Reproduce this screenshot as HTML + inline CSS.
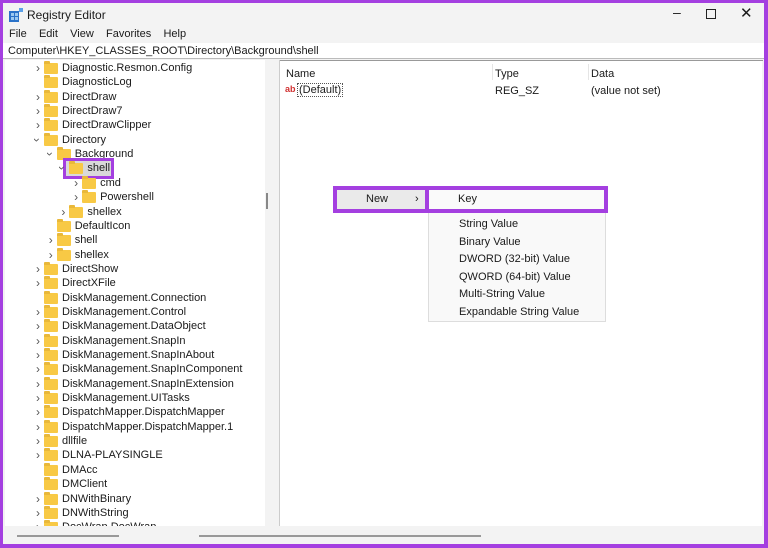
<!DOCTYPE html>
<html><head><meta charset="utf-8"><style>
*{margin:0;padding:0;box-sizing:border-box}
body{width:768px;height:548px;overflow:hidden;background:#a43fe0;font-family:"Liberation Sans",sans-serif;font-size:11px;color:#1a1a1a;position:relative}
#win{position:absolute;left:3px;top:3px;width:761px;height:541px;background:#f3f3f3}
.abs{position:absolute;white-space:nowrap}
#tree{position:absolute;left:2px;top:57px;width:260px;height:466px;background:#fff;overflow:hidden}
#right{position:absolute;left:276px;top:57px;width:483px;height:466px;background:#fff;border-left:1px solid #ccc}
.row{position:absolute;height:14px;line-height:14px;white-space:nowrap}
.fd{position:absolute;top:2px;width:14px;height:11px;background:#f8c945;border-radius:1px}
.fd:before{content:"";position:absolute;left:0;top:-2px;width:6px;height:3px;background:#e9b83a;border-radius:1px 1px 0 0}
.ch{position:absolute;top:0;font-size:12px;color:#555}
.mi{position:absolute;left:30px;height:17.5px;line-height:17.5px}
</style></head><body>
<div id="win">
<svg class="abs" style="left:6px;top:5px" width="14" height="14"><rect x="0" y="3" width="10" height="11" fill="#2a72c8"/><rect x="2" y="5" width="3" height="3" fill="#9cc8f0"/><rect x="6" y="5" width="3" height="3" fill="#9cc8f0"/><rect x="2" y="9" width="3" height="3" fill="#9cc8f0"/><rect x="6" y="9" width="3" height="3" fill="#9cc8f0"/><rect x="10" y="0" width="4" height="4" fill="#5aa0e8"/></svg>
<div class="abs" style="left:24px;top:5px;font-size:12px">Registry Editor</div>
<div class="abs" style="left:670px;top:1px;font-size:14px">&#8211;</div>
<div class="abs" style="left:703px;top:6px;width:10px;height:10px;border:1px solid #222"></div>
<div class="abs" style="left:737px;top:1px;font-size:15px">&#10005;</div>
<div class="abs" style="left:6px;top:25px">File&nbsp;&nbsp;&nbsp;&nbsp;Edit&nbsp;&nbsp;&nbsp;&nbsp;View&nbsp;&nbsp;&nbsp;&nbsp;Favorites&nbsp;&nbsp;&nbsp;&nbsp;Help</div>
<div class="abs" style="left:0;top:40px;width:761px;height:16px;background:#fff;border-bottom:1px solid #bbb"></div>
<div class="abs" style="left:5px;top:42px">Computer\HKEY_CLASSES_ROOT\Directory\Background\shell</div>
<div id="tree"></div>
<div class="abs" style="left:263px;top:190px;width:2px;height:16px;background:#888"></div>
<div class="abs" style="left:14px;top:532px;width:102px;height:2px;background:#999"></div>
<div class="abs" style="left:196px;top:532px;width:282px;height:2px;background:#999"></div>
<div id="right">
<div class="abs" style="left:0;top:0;width:483px;height:1px;background:#999"></div>
<div class="abs" style="left:6px;top:8px">Name</div>
<div class="abs" style="left:212px;top:4px;width:1px;height:16px;background:#e5e5e5"></div>
<div class="abs" style="left:215px;top:8px">Type</div>
<div class="abs" style="left:308px;top:4px;width:1px;height:16px;background:#e5e5e5"></div>
<div class="abs" style="left:311px;top:8px">Data</div>
<div class="abs" style="left:5px;top:24px;font-size:9px;font-weight:bold;color:#d03030">ab</div>
<div class="abs" style="left:17px;top:23px;border:1px dotted #555;padding:0 1px">(Default)</div>
<div class="abs" style="left:215px;top:25px">REG_SZ</div>
<div class="abs" style="left:311px;top:25px">(value not set)</div>
</div>
<div class="abs" style="left:425px;top:207px;width:178px;height:112px;background:#f9f9f9;border:1px solid #ddd">
<div class="mi" style="top:5px">String Value</div>
<div class="mi" style="top:22.5px">Binary Value</div>
<div class="mi" style="top:40px">DWORD (32-bit) Value</div>
<div class="mi" style="top:57.5px">QWORD (64-bit) Value</div>
<div class="mi" style="top:75px">Multi-String Value</div>
<div class="mi" style="top:92.5px">Expandable String Value</div>
</div>
<div class="abs" style="left:330px;top:183px;width:275px;height:27px;background:#a43fe0"></div>
<div class="abs" style="left:334px;top:187px;width:88px;height:19px;background:#eaeaea;line-height:19px"><span style="position:absolute;left:29px">New</span><span style="position:absolute;left:78px">&#8250;</span></div>
<div class="abs" style="left:426px;top:187px;width:175px;height:19px;background:#fafafa;line-height:19px"><span style="position:absolute;left:29px">Key</span></div>
</div>
<script>
var items=[[0,'Diagnostic.Resmon.Config','>'],[0,'DiagnosticLog',''],[0,'DirectDraw','>'],[0,'DirectDraw7','>'],[0,'DirectDrawClipper','>'],[0,'Directory','v'],[1,'Background','v'],[2,'shell','v'],[3,'cmd','>'],[3,'Powershell','>'],[2,'shellex','>'],[1,'DefaultIcon',''],[1,'shell','>'],[1,'shellex','>'],[0,'DirectShow','>'],[0,'DirectXFile','>'],[0,'DiskManagement.Connection',''],[0,'DiskManagement.Control','>'],[0,'DiskManagement.DataObject','>'],[0,'DiskManagement.SnapIn','>'],[0,'DiskManagement.SnapInAbout','>'],[0,'DiskManagement.SnapInComponent','>'],[0,'DiskManagement.SnapInExtension','>'],[0,'DiskManagement.UITasks','>'],[0,'DispatchMapper.DispatchMapper','>'],[0,'DispatchMapper.DispatchMapper.1','>'],[0,'dllfile','>'],[0,'DLNA-PLAYSINGLE','>'],[0,'DMAcc',''],[0,'DMClient',''],[0,'DNWithBinary','>'],[0,'DNWithString','>'],[0,'DocWrap.DocWrap','>']];
var h='';
items.forEach(function(it,i){
 var tx=57+it[0]*12.7, top=1+i*14.35;
 if(it[1]=='shell'&&it[0]==2){h+='<div class="abs" style="left:'+(tx-24)+'px;top:'+(top-3)+'px;width:51px;height:21px;background:#a43fe0"></div><div class="abs" style="left:'+(tx-21)+'px;top:'+top+'px;width:45px;height:15px;background:#d9d9d9"></div>';}
 h+='<div class="row" style="top:'+top+'px;left:0;width:260px">';
 if(it[2]=='>')h+='<span class="ch" style="left:'+(tx-26)+'px">&#8250;</span>';
 if(it[2]=='v')h+='<span class="ch" style="left:'+(tx-27)+'px;transform:rotate(90deg);display:inline-block">&#8250;</span>';
 h+='<span class="fd" style="left:'+(tx-18)+'px"></span><span style="position:absolute;left:'+tx+'px">'+it[1]+'</span></div>';
});
document.getElementById('tree').innerHTML=h;
</script>
</body></html>
